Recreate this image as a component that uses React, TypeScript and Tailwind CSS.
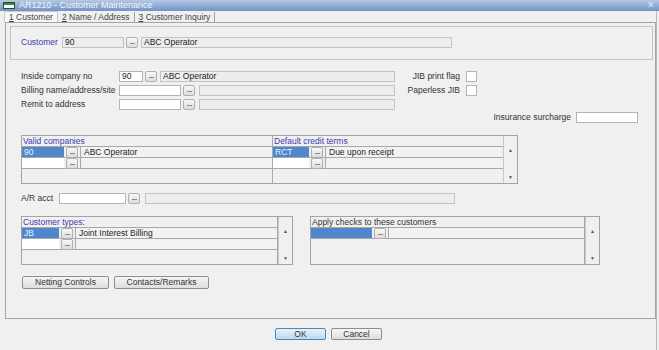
import React from "react";

const FONT = "font-['Liberation_Sans',Arial,sans-serif]";

function Field({ w, value, tone = "white", className = "" }: { w: string; value?: string; tone?: "white" | "gray"; className?: string }) {
  return (
    <div
      className={`${w} h-[11px] shrink-0 border px-[2px] text-[8.5px] leading-[9px] text-[#222] ${
        tone === "white" ? "border-[#b4b4b4] bg-white" : "border-[#c2c2c2] bg-[#ededed]"
      } ${className}`}
    >
      {value}
    </div>
  );
}

function Dots({ className = "" }: { className?: string }) {
  return (
    <div
      className={`flex h-[11px] w-[12px] shrink-0 items-center justify-center rounded-[2px] border border-[#b0b0b0] bg-linear-to-b from-[#f8f8f8] to-[#dcdcdc] ${className}`}
    >
      <div className="mt-[2px] h-px w-[5px] bg-[#8a8a8a]" />
    </div>
  );
}

function Check() {
  return <div className="h-[11px] w-[11px] shrink-0 border border-[#b4b4b4] bg-white" />;
}

function ScrollCol() {
  return (
    <div className="flex w-[14px] shrink-0 flex-col items-center justify-between border-l border-[#c8c8c8] pb-[3px] pt-[12px] text-[5px] leading-[5px] text-[#555]">
      <span>▲</span>
      <span>▼</span>
    </div>
  );
}

function GridRow({
  code,
  codeW,
  text,
  selected,
}: {
  code?: string;
  codeW: string;
  text?: string;
  selected?: boolean;
}) {
  return (
    <div className="flex h-[11px] items-center border-b border-[#a8a8a8]">
      <div
        className={`${codeW} h-full shrink-0 px-[2px] text-[8.5px] leading-[10px] ${
          selected ? "bg-[#4f87cc] text-[#e8f0ff]" : "bg-white"
        }`}
      >
        {code}
      </div>
      <Dots className="mx-[2px] h-[10px]" />
      <div className="h-full flex-1 border-l border-[#a8a8a8] bg-[#f2f2f2] px-[3px] text-[8.5px] leading-[10px] text-[#222]">
        {text}
      </div>
    </div>
  );
}

function GridHead({ title, blue = true }: { title: string; blue?: boolean }) {
  return (
    <div
      className={`h-[11px] border-b border-[#a8a8a8] px-[1px] text-[8.5px] leading-[10px] ${
        blue ? "text-[#3b3bb0]" : "text-[#333]"
      }`}
    >
      {title}
    </div>
  );
}

export default function App() {
  return (
    <div className={`relative h-[350px] w-[659px] overflow-hidden bg-[#f0f0f0] ${FONT}`}>
      {/* title bar */}
      <div className="flex h-[11px] items-center bg-linear-to-b from-[#b6c8e2] to-[#6f94c8] pl-[3px] pr-[4px]">
        <div className="h-[7px] w-[12px] border border-[#2e4a2e] bg-white">
          <div className="h-[2px] bg-[#3f8a3f]" />
        </div>
        <span className="ml-[4px] text-[9px] leading-[11px] text-[#f2f6fc]">AR1210 - Customer Maintenance</span>
        <span className="ml-auto text-[9px] leading-[11px] text-[#dfe8f4]">✕</span>
      </div>

      {/* tabs */}
      <div className="flex h-[11px] items-end pl-[4px] text-[8.5px] leading-[10px] text-[#444]">
        <div className="h-[11px] border-x border-t border-[#c8c8c8] bg-[#f7f7f7] px-[4px]">
          <span className="underline">1</span> Customer
        </div>
        <div className="h-[10px] border-r border-[#a0a0a0] px-[4px]">
          <span className="underline">2</span> Name / Address
        </div>
        <div className="h-[10px] border-r border-[#a0a0a0] px-[4px]">
          <span className="underline">3</span> Customer Inquiry
        </div>
      </div>

      {/* main panel */}
      <div className="ml-[5px] h-[297px] w-[651px] border border-[#a4a4a4]">
        <div className="ml-[4px] mt-[3px] flex h-[34px] w-[643px] items-start border border-[#c4c4c4] pl-[10px] pt-[10px]">
          <div className="w-[41px] text-[8.5px] leading-[11px] text-[#3b3bb0]">Customer</div>
          <Field w="w-[62px]" value="90" tone="gray" />
          <Dots className="ml-[2px]" />
          <Field w="w-[311px]" value="ABC Operator" tone="gray" className="ml-[3px]" />
        </div>

        <div className="ml-[15px] mt-[11px] flex flex-col gap-[3px] text-[8.5px] leading-[11px] text-[#333]">
          <div className="flex items-center">
            <div className="w-[98px]">Inside company no</div>
            <Field w="w-[24px]" value="90" />
            <Dots className="ml-[2px]" />
            <Field w="w-[235px]" value="ABC Operator" tone="gray" className="ml-[3px]" />
            <div className="mr-[6px] w-[65px] text-right">JIB print flag</div>
            <Check />
          </div>
          <div className="flex items-center">
            <div className="w-[98px]">Billing name/address/site</div>
            <Field w="w-[62px]" />
            <Dots className="ml-[2px]" />
            <Field w="w-[196px]" tone="gray" className="ml-[4px]" />
            <div className="mr-[6px] w-[65px] text-right">Paperless JIB</div>
            <Check />
          </div>
          <div className="flex items-center">
            <div className="w-[98px]">Remit to address</div>
            <Field w="w-[62px]" />
            <Dots className="ml-[2px]" />
            <Field w="w-[196px]" tone="gray" className="ml-[4px]" />
          </div>
          <div className="mt-[-1px] flex w-[617px] items-center justify-end gap-[5px]">
            <div>Insurance surcharge</div>
            <Field w="w-[62px]" />
          </div>
        </div>

        {/* valid companies / credit terms */}
        <div className="ml-[15px] mt-[12px] flex h-[49px] w-[497px] border border-[#a4a4a4]">
          <div className="w-[251px] border-r border-[#a8a8a8]">
            <GridHead title="Valid companies" />
            <GridRow code="90" codeW="w-[42px]" text="ABC Operator" selected />
            <GridRow codeW="w-[42px]" />
          </div>
          <div className="w-[230px]">
            <GridHead title="Default credit terms" />
            <GridRow code="RCT" codeW="w-[36px]" text="Due upon receipt" selected />
            <GridRow codeW="w-[36px]" />
          </div>
          <ScrollCol />
        </div>

        {/* A/R acct */}
        <div className="ml-[15px] mt-[9px] flex items-center text-[8.5px] leading-[11px] text-[#333]">
          <div className="w-[38px]">A/R acct</div>
          <Field w="w-[67px]" />
          <Dots className="ml-[2px]" />
          <Field w="w-[310px]" tone="gray" className="ml-[5px]" />
        </div>

        {/* customer types / apply checks */}
        <div className="ml-[15px] mt-[12px] flex h-[49px] items-start gap-[17px]">
          <div className="flex h-full w-[272px] border border-[#a4a4a4]">
            <div className="flex-1 border-r border-[#a8a8a8]">
              <GridHead title="Customer types:" />
              <GridRow code="JB" codeW="w-[37px]" text="Joint Interest Billing" selected />
              <GridRow codeW="w-[37px]" />
            </div>
            <ScrollCol />
          </div>
          <div className="flex h-full w-[290px] border border-[#a4a4a4]">
            <div className="flex-1 border-r border-[#a8a8a8]">
              <GridHead title="Apply checks to these customers" blue={false} />
              <GridRow codeW="w-[61px]" selected />
            </div>
            <ScrollCol />
          </div>
        </div>

        {/* buttons */}
        <div className="ml-[16px] mt-[11px] flex gap-[5px] text-[8.5px] text-[#333]">
          <button className="h-[13px] w-[87px] rounded-[2px] border border-[#8e8e8e] bg-linear-to-b from-[#f6f6f6] to-[#dedede] leading-[11px]">
            Netting Controls
          </button>
          <button className="h-[13px] w-[95px] rounded-[2px] border border-[#8e8e8e] bg-linear-to-b from-[#f6f6f6] to-[#dedede] leading-[11px]">
            Contacts/Remarks
          </button>
        </div>
      </div>

      {/* OK / Cancel */}
      <div className="mt-[9px] flex justify-center gap-[5px] text-[8.5px] text-[#333]">
        <button className="ml-[-2px] h-[12px] w-[51px] rounded-[2px] border border-[#4f86b8] bg-linear-to-b from-[#e6f2fb] to-[#bcd9ef] leading-[10px]">
          OK
        </button>
        <button className="h-[12px] w-[51px] rounded-[2px] border border-[#8e8e8e] bg-linear-to-b from-[#f6f6f6] to-[#dedede] leading-[10px]">
          Cancel
        </button>
      </div>

      <div className="absolute right-[2px] top-[11px] h-[339px] w-px bg-[#b8b8b8]" />
    </div>
  );
}
